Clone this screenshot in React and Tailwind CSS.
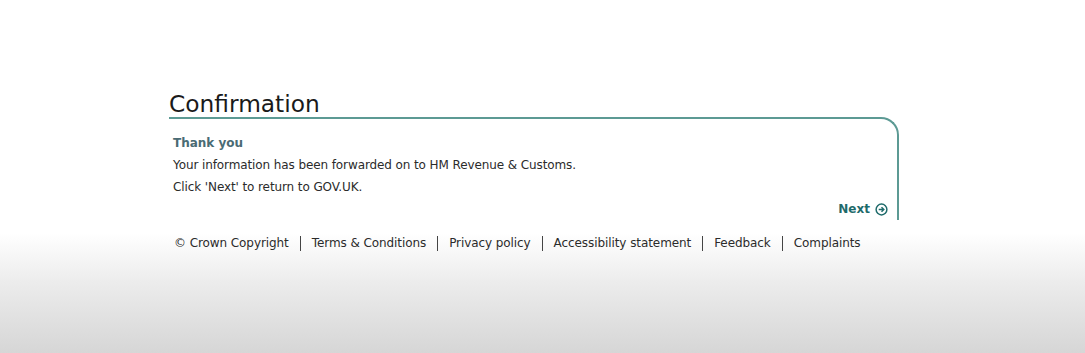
import React from 'react';

const links = ['Terms & Conditions', 'Privacy policy', 'Accessibility statement', 'Feedback', 'Complaints'];

const NextIcon = () => (
  <svg width="13" height="13" viewBox="0 0 14 14" fill="none" stroke="currentColor" strokeWidth="1.6">
    <circle cx="7" cy="7" r="5.8" />
    <path d="M4 7h5.5M7 4.5L9.5 7 7 9.5" />
  </svg>
);

export default function App() {
  return (
    <div className="h-[353px] w-full bg-[linear-gradient(to_bottom,#ffffff_0%,#ffffff_66%,#ececec_80%,#d6d6d6_100%)] font-['DejaVu_Sans',Verdana,sans-serif] overflow-hidden">
      <div className="ml-[169px] w-[730px] pt-[90px]">
        <h1 className="text-[23.3px] leading-[27px] text-[#1a1a1a]">Confirmation</h1>
        <div className="border-t-2 border-r-2 border-[#5c9a94] rounded-tr-[18px] pt-[16px] pl-[4px] pr-[9px] h-[103px]">
          <p className="text-[12px] font-bold text-[#4a6b74] leading-[16px]">Thank you</p>
          <p className="text-[12px] text-[#2b2b2b] leading-[16px] mt-[6px] tracking-[-0.1px]">Your information has been forwarded on to HM Revenue &amp; Customs.</p>
          <p className="text-[12px] text-[#2b2b2b] leading-[16px] mt-[6px] tracking-[-0.1px]">Click 'Next' to return to GOV.UK.</p>
          <div className="flex justify-end mt-[6px]">
            <a className="flex items-center gap-[5px] text-[12px] font-bold text-[#1f6b6b] leading-[16px]">
              Next <NextIcon />
            </a>
          </div>
        </div>
        <div className="flex items-center text-[12px] text-[#2b2b2b] mt-[15px] pl-[5px] leading-[16px] tracking-[-0.08px]">
          <span>© Crown Copyright</span>
          {links.map((l) => (
            <React.Fragment key={l}>
              <span className="mx-[11px] w-px h-[15px] bg-[#444]" />
              <span>{l}</span>
            </React.Fragment>
          ))}
        </div>
      </div>
    </div>
  );
}
